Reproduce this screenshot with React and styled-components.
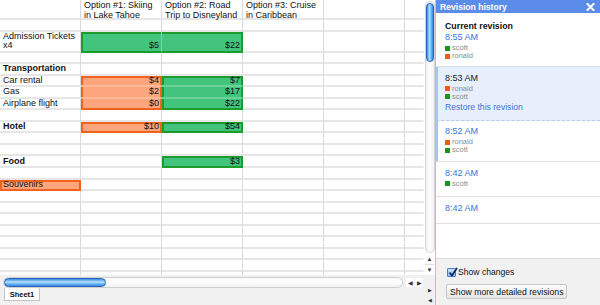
import React from "react";
import styled, { createGlobalStyle } from "styled-components";

const GREEN_FILL = "#43c47d";
const GREEN_EDGE = "#1d9b2b";
const ORANGE_FILL = "#fda57c";
const ORANGE_EDGE = "#f2621f";

const Global = createGlobalStyle`
  html, body { margin: 0; padding: 0; }
  body {
    width: 600px; height: 305px; overflow: hidden; background: #fff;
    font-family: "Liberation Sans", Arial, sans-serif;
  }
  * { box-sizing: border-box; }
`;

const Page = styled.div`
  display: flex;
  width: 600px;
  height: 305px;
  overflow: hidden;
`;

const SheetArea = styled.div`
  width: 435px;
  display: flex;
  flex-direction: column;
`;

const SheetTop = styled.div`
  height: 275px;
  display: flex;
  background: #fff;
`;

const GridPane = styled.div`
  width: 424px;
  height: 275px;
  overflow: hidden;
`;

const Grid = styled.div`
  display: grid;
  grid-template-columns: repeat(5, 81px) 19px;
  grid-template-rows: ${(p) => p.$rows};
`;

const fillOf = (t) => (t === "green" ? GREEN_FILL : t === "orange" ? ORANGE_FILL : "transparent");
const edgeOf = (t) => (t === "green" ? GREEN_EDGE : ORANGE_EDGE);

const Cell = styled.div`
  min-width: 0;
  border-right: 1px solid
    ${(p) => (p.$tone ? (p.$edges.includes("r") ? edgeOf(p.$tone) : "rgba(255,255,255,0.3)") : p.$last ? "transparent" : "#dadada")};
  border-bottom: 2px solid
    ${(p) => (p.$tone ? (p.$edges.includes("b") ? edgeOf(p.$tone) : "rgba(255,255,255,0.22)") : "#e6e6e6")};
  background: ${(p) => fillOf(p.$tone)};
  box-shadow: ${(p) => {
    if (!p.$tone) return "none";
    const c = edgeOf(p.$tone);
    const s = [];
    if (p.$edges.includes("l")) s.push(`inset 2px 0 0 ${c}`);
    if (p.$edges.includes("t")) s.push(`inset 0 2px 0 ${c}`);
    if (p.$edges.includes("r")) s.push(`inset -1px 0 0 ${c}`);
    return s.length ? s.join(", ") : "none";
  }};
  display: flex;
  align-items: ${(p) => (p.$header ? "flex-start" : "flex-end")};
  justify-content: ${(p) => (p.$num ? "flex-end" : "flex-start")};
  padding: ${(p) => (p.$header ? "1px 2px 0 3px" : "0 2px 0 3px")};
  font-size: 9px;
  line-height: 9.5px;
  font-weight: ${(p) => (p.$bold ? 700 : 400)};
  color: #111;
  white-space: pre;
  overflow: visible;
`;

const VScroll = styled.div`
  width: 11px;
  height: 275px;
  display: flex;
  flex-direction: column;
  align-items: center;
  padding: 1px 0 1px 0;
  background: #fff;
`;

const VTrack = styled.div`
  width: 10px;
  height: 253px;
  border: 1px solid #d4d4d4;
  border-radius: 5px;
  background: linear-gradient(to right, #f2f2f2, #fff 50%, #f2f2f2);
  padding: 1px 0 0 0;
  display: flex;
  justify-content: center;
`;

const VThumb = styled.div`
  width: 10px;
  height: 59px;
  border: 1px solid #2563bd;
  border-radius: 5px;
  background: linear-gradient(to right, #3c8ae6, #b9e2ff 45%, #78c0fa 62%, #3b86e0);
`;

const ArrowBox = styled.div`
  width: 9px;
  height: 10px;
  display: flex;
  align-items: center;
  justify-content: center;
  font-size: 6px;
  line-height: 1;
  color: #333;
  background: #fff;
  border-top: ${(p) => (p.$sep ? "1px solid #e0e0e0" : "none")};
  margin-top: ${(p) => (p.$first ? "1px" : "0")};
`;

const SheetBottom = styled.div`
  flex: 1;
  display: flex;
  background: #f0f0f0;
`;

const BottomLeft = styled.div`
  width: 424px;
  display: flex;
  flex-direction: column;
`;

const HScrollRow = styled.div`
  display: flex;
  align-items: center;
  height: 11px;
  margin-top: 2px;
  padding-left: 3px;
`;

const HTrack = styled.div`
  width: 400px;
  height: 11px;
  border: 1px solid #cfcfcf;
  border-radius: 6px;
  background: linear-gradient(#fafafa, #fff 50%, #f0f0f0);
  display: flex;
  align-items: center;
`;

const HThumb = styled.div`
  width: 102px;
  height: 9px;
  border: 1px solid #2563bd;
  border-radius: 5px;
  background: linear-gradient(#3c8ae6, #b9e2ff 45%, #78c0fa 62%, #3b86e0);
`;

const HArrows = styled.div`
  display: flex;
  gap: 1px;
  margin-left: 3px;
`;

const HArrow = styled.div`
  width: 8px;
  height: 9px;
  display: flex;
  align-items: center;
  justify-content: center;
  font-size: 6px;
  line-height: 1;
  color: #333;
  background: #fff;
`;

const TabRow = styled.div`
  display: flex;
  padding-left: 4px;
`;

const Tab = styled.div`
  width: 36px;
  height: 13px;
  background: #fff;
  border: 1px solid #c4c4c4;
  border-top: none;
  font-size: 7.5px;
  font-weight: 700;
  color: #111;
  display: flex;
  align-items: center;
  justify-content: center;
`;

const BottomRight = styled.div`
  width: 11px;
  display: flex;
  flex-direction: column;
  align-items: center;
  padding-top: 12px;
  gap: 3px;
  font-size: 5px;
  line-height: 7px;
  color: #333;
`;

/* Revision panel */
const Panel = styled.div`
  width: 165px;
  height: 305px;
  display: flex;
  flex-direction: column;
  border-left: 1px solid #a9c1f3;
  background: #fff;
`;

const PanelHeader = styled.div`
  height: 13px;
  background: #5b8ce9;
  color: #fff;
  font-weight: 700;
  font-size: 8.6px;
  display: flex;
  align-items: center;
  justify-content: space-between;
  padding: 0 5px 0 4px;
`;

const RevList = styled.div`
  flex: 1;
  display: flex;
  flex-direction: column;
`;

const RevItem = styled.div`
  padding: ${(p) => (p.$current ? "8px 0 6px 9px" : `5.5px 0 ${p.$pb}px 9px`)};
  border-bottom: 1px ${(p) => (p.$selected ? "dashed #b7c8ef" : "solid #e0e0e0")};
  background: ${(p) => (p.$selected ? "#e7eefc" : "#fff")};
  box-shadow: ${(p) => (p.$inRange ? "inset 2px 0 0 #a9c1f3" : "none")};
`;

const RevTitle = styled.div`
  font-size: 8.8px;
  line-height: 11px;
  font-weight: 700;
  color: #111;
`;

const RevTime = styled.div`
  font-size: 9px;
  line-height: 11px;
  color: ${(p) => (p.$active ? "#1a1a1a" : "#3b74d9")};
`;

const Names = styled.div`
  margin-top: 1px;
  display: flex;
  flex-direction: column;
`;

const Name = styled.div`
  display: flex;
  align-items: center;
  gap: 2px;
  font-size: 7.5px;
  line-height: 8px;
  color: #8c8c8c;
`;

const Swatch = styled.span`
  width: 5px;
  height: 5px;
  background: ${(p) => p.$color};
  display: inline-block;
`;

const RestoreLink = styled.div`
  margin-top: 1.5px;
  font-size: 8.6px;
  line-height: 11px;
  color: #3b74d9;
`;

const Footer = styled.div`
  height: 47px;
  background: #f1f1f1;
  border-top: 1px solid #dadada;
  padding: 8px 0 0 10px;
  display: flex;
  flex-direction: column;
  align-items: flex-start;
  gap: 7px;
`;

const CheckRow = styled.label`
  display: flex;
  align-items: center;
  gap: 2px;
  height: 10px;
  margin-left: 1px;
  font-size: 8.6px;
  color: #111;
`;

const CheckBox = styled.span`
  width: 9px;
  height: 9px;
  border: 1px solid #4d7fc9;
  border-radius: 1px;
  background: linear-gradient(#cfe3fb, #8fb9ee);
  position: relative;
  display: inline-block;
`;

const CheckMark = styled.svg`
  position: absolute;
  left: 0;
  top: -2px;
`;

const Button = styled.div`
  height: 15px;
  padding: 0 3px;
  border: 1px solid #c7c7c7;
  border-radius: 2px;
  background: linear-gradient(#fbfbfb, #e6e6e6);
  font-size: 8.7px;
  color: #111;
  display: flex;
  align-items: center;
`;

const G = "green";
const O = "orange";

const SINGLE = 11.55;
const rows = [
  {
    h: 20,
    header: true,
    cells: ["", "Option #1: Skiing\nin Lake Tahoe", "Option #2: Road\nTrip to Disneyland", "Option #3: Cruise\nin Caribbean"],
  },
  { h: SINGLE, cells: [] },
  {
    h: 21,
    cells: ["Admission Tickets\nx4", { t: "$5", tone: G, e: "tlb", num: true }, { t: "$22", tone: G, e: "trb", num: true }],
  },
  { h: SINGLE, cells: [] },
  { h: SINGLE, cells: [{ t: "Transportation", bold: true }] },
  { h: SINGLE, cells: ["Car rental", { t: "$4", tone: O, e: "tlr", num: true }, { t: "$7", tone: G, e: "tlr", num: true }] },
  { h: SINGLE, cells: ["Gas", { t: "$2", tone: O, e: "lr", num: true }, { t: "$17", tone: G, e: "lr", num: true }] },
  { h: SINGLE, cells: ["Airplane flight", { t: "$0", tone: O, e: "lrb", num: true }, { t: "$22", tone: G, e: "lrb", num: true }] },
  { h: SINGLE, cells: [] },
  { h: SINGLE, cells: [{ t: "Hotel", bold: true }, { t: "$10", tone: O, e: "tlrb", num: true }, { t: "$54", tone: G, e: "tlrb", num: true }] },
  { h: SINGLE, cells: [] },
  { h: SINGLE, cells: [] },
  { h: SINGLE, cells: [{ t: "Food", bold: true }, "", { t: "$3", tone: G, e: "tlrb", num: true }] },
  { h: SINGLE, cells: [] },
  { h: SINGLE, cells: [{ t: "Souvenirs", tone: O, e: "tlrb" }] },
  ...Array.from({ length: 8 }, () => ({ h: SINGLE, cells: [] })),
];

const rowTemplate = rows.map((r) => `${r.h}px`).join(" ");

const revisions = [
  { time: "8:53 AM", names: ["ronald", "scott"], selected: true, inRange: true, pb: 6.5 },
  { time: "8:52 AM", names: ["ronald", "scott"], inRange: true, pb: 7 },
  { time: "8:42 AM", names: ["scott"], pb: 8.5 },
  { time: "8:42 AM", names: [], pb: 9.5 },
];

const NAME_COLOR = { scott: "#17961b", ronald: "#ff5512" };

function NameList({ names }) {
  if (!names.length) return null;
  return (
    <Names>
      {names.map((n) => (
        <Name key={n}>
          <Swatch $color={NAME_COLOR[n]} />
          {n}
        </Name>
      ))}
    </Names>
  );
}

export default function App() {
  return (
    <>
      <Global />
      <Page>
        <SheetArea>
          <SheetTop>
            <GridPane>
              <Grid $rows={rowTemplate}>
                {rows.map((row, ri) =>
                  Array.from({ length: 6 }, (_, ci) => {
                    const raw = row.cells[ci];
                    const c = raw == null ? { t: "" } : typeof raw === "string" ? { t: raw } : raw;
                    return (
                      <Cell
                        key={`${ri}-${ci}`}
                        $header={row.header}
                        $tone={c.tone}
                        $edges={c.e || ""}
                        $num={c.num}
                        $bold={c.bold}
                        $last={ci === 5}
                      >
                        {c.t}
                      </Cell>
                    );
                  })
                )}
              </Grid>
            </GridPane>
            <VScroll>
              <VTrack>
                <VThumb />
              </VTrack>
              <ArrowBox $first>▲</ArrowBox>
              <ArrowBox $sep>▼</ArrowBox>
            </VScroll>
          </SheetTop>
          <SheetBottom>
            <BottomLeft>
              <HScrollRow>
                <HTrack>
                  <HThumb />
                </HTrack>
                <HArrows>
                  <HArrow>◀</HArrow>
                  <HArrow>▶</HArrow>
                </HArrows>
              </HScrollRow>
              <TabRow>
                <Tab>Sheet1</Tab>
              </TabRow>
            </BottomLeft>
            <BottomRight>
              <span>▶</span>
              <span>◀</span>
            </BottomRight>
          </SheetBottom>
        </SheetArea>

        <Panel>
          <PanelHeader>
            <span>Revision history</span>
            <svg width="9" height="8" viewBox="0 0 9 8">
              <path d="M1.5 1 L7.5 7 M7.5 1 L1.5 7" stroke="#fff" strokeWidth="2" strokeLinecap="square" />
            </svg>
          </PanelHeader>
          <RevList>
            <RevItem $current>
              <RevTitle>Current revision</RevTitle>
              <RevTime>8:55 AM</RevTime>
              <NameList names={["scott", "ronald"]} />
            </RevItem>
            {revisions.map((r, i) => (
              <RevItem key={i} $selected={r.selected} $inRange={r.inRange} $pb={r.pb}>
                <RevTime $active={r.selected}>{r.time}</RevTime>
                <NameList names={r.names} />
                {r.selected && <RestoreLink>Restore this revision</RestoreLink>}
              </RevItem>
            ))}
          </RevList>
          <Footer>
            <CheckRow>
              <CheckBox>
                <CheckMark width="10" height="10" viewBox="0 0 10 10">
                  <path d="M1.5 5.5 L4 8.5 L9 1" fill="none" stroke="#0d2a66" strokeWidth="1.8" />
                </CheckMark>
              </CheckBox>
              Show changes
            </CheckRow>
            <Button>Show more detailed revisions</Button>
          </Footer>
        </Panel>
      </Page>
    </>
  );
}
